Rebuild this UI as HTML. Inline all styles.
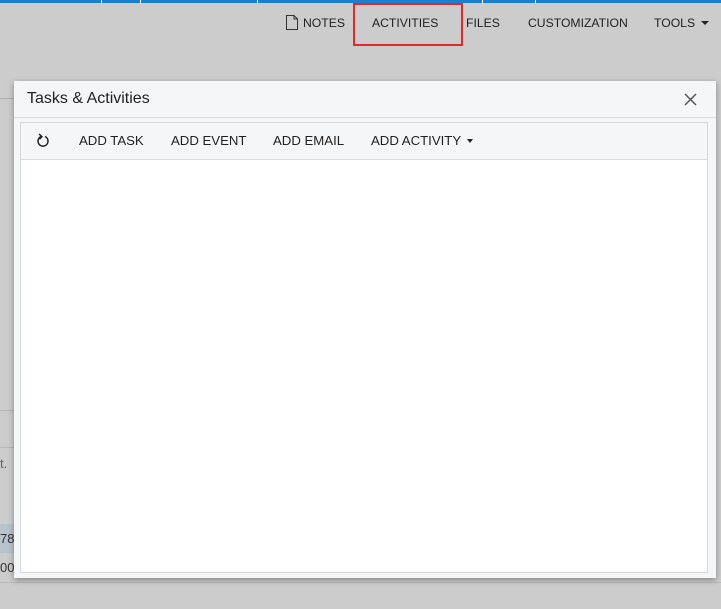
<!DOCTYPE html>
<html><head><style>
body{margin:0;width:721px;height:609px;background:#cccccc;font-family:"Liberation Sans",sans-serif;position:relative;overflow:hidden}
.a{position:absolute}
.nav{font-size:12.2px;color:#222;top:16px}
.tb{font-size:13.2px;color:#222;top:133px}
</style></head><body>
<div class="a" style="left:0;top:0;width:721px;height:3px;background:#1a7fd0"></div>
<div class="a" style="left:101px;top:0;width:1px;height:3px;background:#fff"></div>
<div class="a" style="left:140px;top:0;width:1px;height:3px;background:#fff"></div>
<div class="a" style="left:257px;top:0;width:1px;height:3px;background:#fff"></div>
<div class="a" style="left:482px;top:0;width:1px;height:3px;background:#fff"></div>
<div class="a" style="left:535px;top:0;width:1px;height:3px;background:#fff"></div>
<svg class="a" style="left:286px;top:15px" width="12" height="15" viewBox="0 0 12 15"><path d="M0.5 0.5H8L11.5 4V14.5H0.5Z M8 0.5V4H11.5" fill="none" stroke="#333"/></svg>
<div class="a nav" style="left:303px">NOTES</div>
<div class="a" style="left:353px;top:3px;width:106px;height:39px;border:2px solid #e02a2a"></div>
<div class="a nav" style="left:372px">ACTIVITIES</div>
<div class="a nav" style="left:466px">FILES</div>
<div class="a nav" style="left:528px">CUSTOMIZATION</div>
<div class="a nav" style="left:654px">TOOLS</div>
<div class="a" style="left:701px;top:21px;border:4px solid transparent;border-top-color:#222;border-bottom:0"></div>
<div class="a" style="left:0;top:98px;width:14px;height:1px;background:#b0b0b0"></div>
<div class="a" style="left:0;top:410px;width:14px;height:1px;background:#b8b8b8"></div>
<div class="a" style="left:0;top:447px;width:14px;height:1px;background:#b8b8b8"></div>
<div class="a" style="left:0;top:456px;font-size:13px;color:#666">t.</div>
<div class="a" style="left:0;top:524px;width:14px;height:29px;background:#b9c3cc"></div>
<div class="a" style="left:0;top:531px;font-size:13px;color:#333">78</div>
<div class="a" style="left:0;top:560px;font-size:13px;color:#333">00</div>
<div class="a" style="left:0;top:582px;width:721px;height:1px;background:#b8b8b8"></div>
<div class="a" style="left:14px;top:81px;width:702px;height:497px;background:#f5f6f8;box-shadow:0 2px 6px rgba(0,0,0,.35)"></div>
<div class="a" style="left:14px;top:117px;width:702px;height:1px;background:#dcdcdc"></div>
<div class="a" style="left:27px;top:90px;font-size:16px;color:#222">Tasks &amp; Activities</div>
<svg class="a" style="left:684px;top:93px" width="13" height="13"><path d="M1 1L12 12M12 1L1 12" stroke="#555" stroke-width="1.5"/></svg>
<div class="a" style="left:20px;top:122px;width:686px;height:449px;background:#fff;border:1px solid #d8d8d8"></div>
<div class="a" style="left:21px;top:123px;width:686px;height:36px;background:#f5f6f8;border-bottom:1px solid #dcdcdc"></div>
<svg class="a" style="left:36px;top:133px" width="14" height="15" viewBox="0 0 14 15"><path d="M5 3.5A5 5 0 1 0 9 3.5" fill="none" stroke="#222" stroke-width="1.5"/><path d="M3 1L6 3.7L3.5 6.3" fill="none" stroke="#222" stroke-width="1.4"/></svg>
<div class="a tb" style="left:79px">ADD TASK</div>
<div class="a tb" style="left:171px">ADD EVENT</div>
<div class="a tb" style="left:273px">ADD EMAIL</div>
<div class="a tb" style="left:371px">ADD ACTIVITY</div>
<div class="a" style="left:467px;top:139px;border:3.5px solid transparent;border-top:4px solid #222;border-bottom:0"></div>
</body></html>
